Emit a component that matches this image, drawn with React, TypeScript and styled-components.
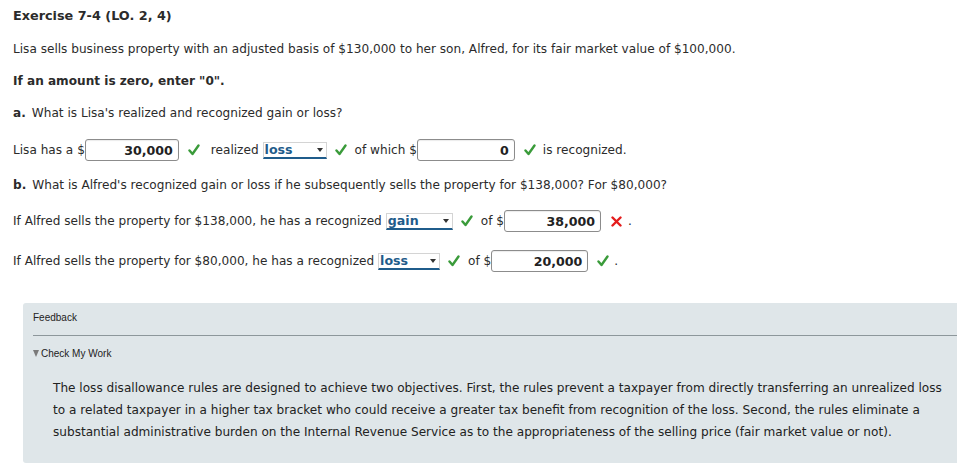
import React from "react";
import styled, { createGlobalStyle } from "styled-components";

const GlobalStyle = createGlobalStyle`
  body {
    margin: 0;
    background: #ffffff;
    font-family: "DejaVu Sans", Verdana, sans-serif;
    color: #2b2b2b;
  }
`;

const Page = styled.div`
  padding: 8px 0 0 13px;
  font-size: 12.1px;
`;

const Title = styled.div`
  font-weight: bold;
  font-size: 12.8px;
  line-height: 16px;
`;

const Para = styled.div<{ $top: number; $bold?: boolean }>`
  margin-top: ${(p) => p.$top}px;
  line-height: 16px;
  font-weight: ${(p) => (p.$bold ? "bold" : "normal")};
`;

const Label = styled.span`
  font-weight: bold;
  margin-right: 6px;
`;

const Row = styled.div<{ $top: number }>`
  margin-top: ${(p) => p.$top}px;
  height: 22px;
  display: flex;
  align-items: center;
  white-space: nowrap;
`;

const Amount = styled.div<{ $w: number }>`
  width: ${(p) => p.$w}px;
  height: 22px;
  box-sizing: border-box;
  border: 1px solid #8c8c8c;
  border-radius: 3px;
  box-shadow: inset 0 1px 1px rgba(0, 0, 0, 0.08);
  display: flex;
  align-items: center;
  justify-content: flex-end;
  padding-right: 5px;
  font-weight: bold;
  font-size: 12.6px;
  color: #222;
`;

const Select = styled.div<{ $w: number }>`
  width: ${(p) => p.$w}px;
  height: 17px;
  box-sizing: border-box;
  margin: 0 4px;
  border: 1px solid #d4d4d4;
  border-bottom: 2px solid #1f5c8b;
  display: flex;
  align-items: center;
  justify-content: space-between;
  padding: 0 3px 0 1px;
  font-weight: bold;
  font-size: 12.6px;
  color: #1f5c8b;
  line-height: 14px;
`;

const Arrow = styled.span`
  width: 0;
  height: 0;
  border-left: 3px solid transparent;
  border-right: 3px solid transparent;
  border-top: 4px solid #333;
`;

const Mark = styled.span<{ $l: number; $r: number }>`
  display: inline-flex;
  margin: 0 ${(p) => p.$r}px 0 ${(p) => p.$l}px;
`;

const FeedbackPanel = styled.div`
  margin: 31px 0 0 10px;
  background: #dfe6e9;
  border-radius: 3px 0 0 3px;
  padding: 8px 0 18px 10px;
  height: 160px;
  box-sizing: border-box;
`;

const SmallLabel = styled.div`
  font-family: "Liberation Sans", Arial, sans-serif;
  font-size: 10px;
  line-height: 14px;
  color: #222;
`;

const Rule = styled.div`
  margin-top: 10px;
  border-top: 1px solid #8d979b;
`;

const Toggle = styled(SmallLabel)`
  margin-top: 11px;
  display: flex;
  align-items: center;
  gap: 2px;
`;

const Tri = styled.span`
  width: 0;
  height: 0;
  border-left: 3.5px solid transparent;
  border-right: 3.5px solid transparent;
  border-top: 7px solid #7a7a7a;
  margin-top: -2px;
`;

const Explanation = styled.div`
  margin: 16px 10px 0 20px;
  line-height: 22px;
  font-size: 12.1px;
  color: #222;
`;

const Check = ({ l = 8, r = 8 }: { l?: number; r?: number }) => (
  <Mark $l={l} $r={r}>
    <svg width="12" height="12" viewBox="0 0 12 12">
      <path d="M1.5 6.5 L4.5 10 L10.5 1.5" fill="none" stroke="#3a9b3a" strokeWidth="2.4" strokeLinecap="round" strokeLinejoin="round" />
    </svg>
  </Mark>
);

const Cross = () => (
  <Mark $l={10} $r={6}>
    <svg width="11" height="11" viewBox="0 0 11 11">
      <path d="M1.5 1.5 L9.5 9.5 M9.5 1.5 L1.5 9.5" stroke="#e41c1c" strokeWidth="2.4" strokeLinecap="round" />
    </svg>
  </Mark>
);

const Choice = ({ value, w }: { value: string; w: number }) => (
  <Select $w={w}>
    <span>{value}</span>
    <Arrow />
  </Select>
);

const App: React.FC = () => (
  <>
    <GlobalStyle />
    <Page>
      <Title>Exercise 7-4 (LO. 2, 4)</Title>
      <Para $top={17}>
        Lisa sells business property with an adjusted basis of $130,000 to her son, Alfred, for its fair market value of $100,000.
      </Para>
      <Para $top={16} $bold>If an amount is zero, enter "0".</Para>
      <Para $top={16}>
        <Label>a.</Label>What is Lisa's realized and recognized gain or loss?
      </Para>
      <Row $top={18}>
        Lisa has a $<Amount $w={94}>30,000</Amount>
        <Check l={9} r={11} />
        realized<Choice value="loss" w={64} />
        <Check l={4} r={8} />
        of which $<Amount $w={98}>0</Amount>
        <Check l={9} r={7} />
        is recognized.
      </Row>
      <Para $top={16}>
        <Label>b.</Label>What is Alfred's recognized gain or loss if he subsequently sells the property for $138,000? For $80,000?
      </Para>
      <Row $top={17}>
        If Alfred sells the property for $138,000, he has a recognized<Choice value="gain" w={67} />
        <Check l={4} r={8} />
        of $<Amount $w={97}>38,000</Amount>
        <Cross />.
      </Row>
      <Row $top={18}>
        If Alfred sells the property for $80,000, he has a recognized<Choice value="loss" w={62} />
        <Check l={4} r={8} />
        of $<Amount $w={97}>20,000</Amount>
        <Check l={9} r={5} />.
      </Row>
      <FeedbackPanel>
        <SmallLabel>Feedback</SmallLabel>
        <Rule />
        <Toggle>
          <Tri />
          Check My Work
        </Toggle>
        <Explanation>
          The loss disallowance rules are designed to achieve two objectives. First, the rules prevent a taxpayer from directly transferring an unrealized loss to a related taxpayer in a higher tax bracket who could receive a greater tax benefit from recognition of the loss. Second, the rules eliminate a substantial administrative burden on the Internal Revenue Service as to the appropriateness of the selling price (fair market value or not).
        </Explanation>
      </FeedbackPanel>
    </Page>
  </>
);

export default App;
